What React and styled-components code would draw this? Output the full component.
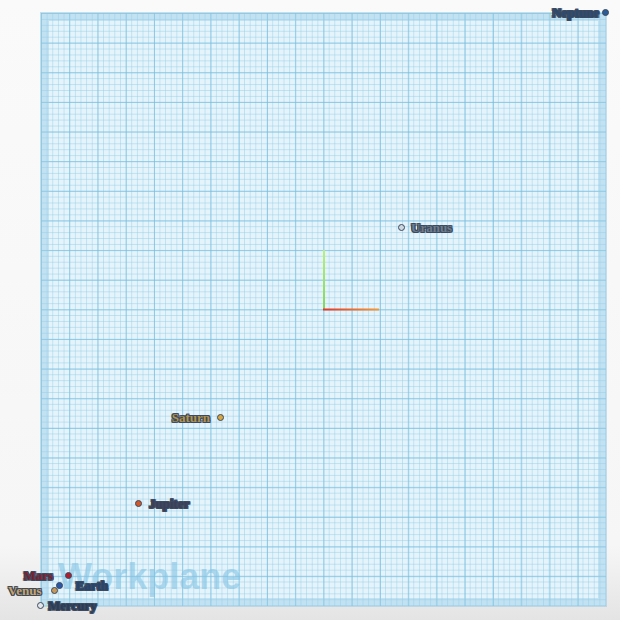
import React from "react";
import styled, { createGlobalStyle } from "styled-components";

const GlobalStyle = createGlobalStyle`
  html, body {
    margin: 0;
    height: 620px;
    overflow: hidden;
  }
  body {
    background: linear-gradient(to bottom, #fafafa 0%, #f6f6f6 88%, #e4e4e4 100%);
    font-family: "Liberation Sans", Arial, sans-serif;
  }
`;

const Stage = styled.div`
  display: flex;
  padding: 13px 0 0 41px;
  width: 620px;
  height: 620px;
  box-sizing: border-box;
`;

// plane is a 20x20 grid, 5 minor cells per major cell
const Workplane = styled.div`
  position: relative;
  width: 565px;
  height: 593px;
  flex: none;
  background-color: #e5f4fb;
  background-image:
    linear-gradient(to right, rgba(120, 190, 222, 0.7) 1px, transparent 1px),
    linear-gradient(to bottom, rgba(120, 190, 222, 0.7) 1px, transparent 1px),
    linear-gradient(to right, rgba(150, 206, 232, 0.5) 1px, transparent 1px),
    linear-gradient(to bottom, rgba(150, 206, 232, 0.5) 1px, transparent 1px);
  background-size: 5% 5%, 5% 5%, 1% 1%, 1% 1%;
  box-shadow: inset 0 0 0 8px rgba(150, 205, 230, 0.45), 0 0 0 1px rgba(160, 205, 225, 0.6);
`;

const PlaneTitle = styled.div`
  position: absolute;
  left: 17px;
  top: 543px;
  font-family: "Liberation Sans", Arial, sans-serif;
  font-weight: 700;
  font-size: 36px;
  color: rgba(130, 195, 228, 0.6);
  pointer-events: none;
`;

const Axes = styled.svg`
  position: absolute;
  left: 280px;
  top: 234px;
  overflow: visible;
`;

const Marker = styled.div`
  position: absolute;
  width: 0;
  height: 0;
`;

const Dot = styled.span`
  position: absolute;
  left: -4px;
  top: -4px;
  width: 5px;
  height: 5px;
  border-radius: 50%;
  border: 1.5px solid #3b4a5e;
  background: ${(p) => p.$fill};
`;

const Label = styled.span`
  position: absolute;
  top: -8px;
  ${(p) => (p.$side === "left" ? `right: ${p.$gap}px;` : `left: ${p.$gap}px;`)}
  white-space: nowrap;
  font-family: "Liberation Serif", "Times New Roman", serif;
  font-weight: 700;
  font-size: 13px;
  line-height: 16px;
  color: ${(p) => p.$color};
  text-shadow:
    -1px 0 #3b4a5e, 1px 0 #3b4a5e, 0 -1px #3b4a5e, 0 1px #3b4a5e,
    -1px -1px #3b4a5e, 1px 1px #3b4a5e, -1px 1px #3b4a5e, 1px -1px #3b4a5e;
`;

const planets = [
  { name: "Mercury", x: 0, y: 592.5, fill: "#e2e6ea", text: "#2c3c58", side: "right", gap: 7 },
  { name: "Venus", x: 13.5, y: 578, fill: "#c8985a", text: "#c9a468", side: "left", gap: 13 },
  { name: "Earth", x: 18.5, y: 573, fill: "#2b58a6", text: "#27446e", side: "right", gap: 16 },
  { name: "Mars", x: 28, y: 563, fill: "#b01c2c", text: "#7e2233", side: "left", gap: 16 },
  { name: "Jupiter", x: 98, y: 490.5, fill: "#d2582a", text: "#3d3f5a", side: "right", gap: 10 },
  { name: "Saturn", x: 180, y: 404.5, fill: "#d8a640", text: "#b3934c", side: "left", gap: 11 },
  { name: "Uranus", x: 361, y: 214.5, fill: "#ccd7de", text: "#6f7d8c", side: "right", gap: 9 },
  { name: "Neptune", x: 565, y: 0, fill: "#2c5c98", text: "#2c4a72", side: "left", gap: 7 },
];

function Planet({ planet }) {
  return (
    <Marker style={{ left: planet.x, top: planet.y }}>
      <Dot $fill={planet.fill} />
      <Label $side={planet.side} $gap={planet.gap} $color={planet.text}>
        {planet.name}
      </Label>
    </Marker>
  );
}

export default function App() {
  return (
    <>
      <GlobalStyle />
      <Stage>
        <Workplane>
          <PlaneTitle>Workplane</PlaneTitle>
          <Axes width="60" height="64" viewBox="0 0 60 64">
            <defs>
              <linearGradient id="yAxis" x1="0" y1="0" x2="0" y2="1">
                <stop offset="0" stopColor="#b8f080" />
                <stop offset="1" stopColor="#7ed85a" />
              </linearGradient>
              <linearGradient id="xAxis" x1="0" y1="0" x2="1" y2="0">
                <stop offset="0" stopColor="#e0382c" />
                <stop offset="1" stopColor="#f09a3a" />
              </linearGradient>
            </defs>
            <rect x="2" y="3" width="2" height="60" fill="url(#yAxis)" />
            <rect x="2" y="61.5" width="56" height="2" fill="url(#xAxis)" />
          </Axes>
          {planets.map((p) => (
            <Planet key={p.name} planet={p} />
          ))}
        </Workplane>
      </Stage>
    </>
  );
}
